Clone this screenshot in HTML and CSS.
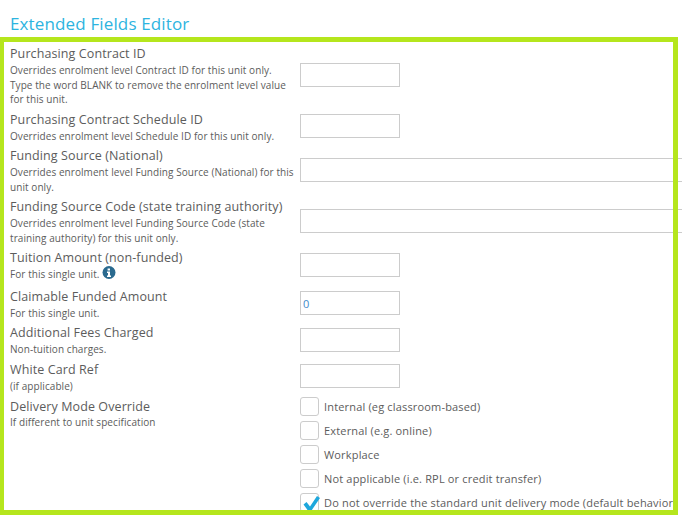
FILE: index.html
```html
<!DOCTYPE html>
<html lang="en">
<head>
<meta charset="utf-8">
<title>Extended Fields Editor</title>
<link rel="stylesheet" href="styles.css">
</head>
<body>
<h2 class="title">Extended Fields Editor</h2>
<div class="panel">
  <div class="row row-tall">
    <div class="info"><div class="name">Purchasing Contract ID</div><div class="hint">Overrides enrolment level Contract ID for this unit only.<br>Type the word BLANK to remove the enrolment level value for this unit.</div></div>
    <input class="field" type="text">
  </div>
  <div class="row">
    <div class="info"><div class="name">Purchasing Contract Schedule ID</div><div class="hint">Overrides enrolment level Schedule ID for this unit only.</div></div>
    <input class="field" type="text">
  </div>
  <div class="row">
    <div class="info"><div class="name">Funding Source (National)</div><div class="hint">Overrides enrolment level Funding Source (National) for this unit only.</div></div>
    <input class="field field-wide" type="text">
  </div>
  <div class="row">
    <div class="info"><div class="name">Funding Source Code (state training authority)</div><div class="hint">Overrides enrolment level Funding Source Code (state training authority) for this unit only.</div></div>
    <input class="field field-wide" type="text">
  </div>
  <div class="row row-icon">
    <div class="info"><div class="name">Tuition Amount (non-funded)</div><div class="hint">For this single unit. <svg class="info-icon" viewBox="0 0 14 14" aria-hidden="true"><circle cx="7" cy="7" r="6.5" fill="#2a6a8f"/><path d="M5.600 2.900h2.400v2H5.600zM5 6h3v4h1v1.400H5V10h1V7.400H5z" fill="#fff"/></svg></div></div>
    <input class="field" type="text">
  </div>
  <div class="row">
    <div class="info"><div class="name">Claimable Funded Amount</div><div class="hint">For this single unit.</div></div>
    <input class="field" type="text" value="0">
  </div>
  <div class="row">
    <div class="info"><div class="name">Additional Fees Charged</div><div class="hint">Non-tuition charges.</div></div>
    <input class="field" type="text">
  </div>
  <div class="row">
    <div class="info"><div class="name">White Card Ref</div><div class="hint">(if applicable)</div></div>
    <input class="field" type="text">
  </div>
  <div class="row row-options">
    <div class="info"><div class="name">Delivery Mode Override</div><div class="hint">If different to unit specification</div></div>
    <div class="options">
      <div class="option"><span class="box"></span><span class="opt-text">Internal (eg classroom-based)</span></div>
      <div class="option"><span class="box"></span><span class="opt-text">External (e.g. online)</span></div>
      <div class="option"><span class="box"></span><span class="opt-text">Workplace</span></div>
      <div class="option"><span class="box"></span><span class="opt-text">Not applicable (i.e. RPL or credit transfer)</span></div>
      <div class="option"><span class="box"><svg class="tick" viewBox="0 0 20 20" aria-hidden="true"><path d="M2.500 10.500 5.500 8 9 12.500 16 2l3 2-9.500 14H8z" fill="#1ea7dc"/></svg></span><span class="opt-text">Do not override the standard unit delivery mode (default behavior)</span></div>
    </div>
  </div>
</div>
</body>
</html>
```
FILE: styles.css
```css
html, body {
  margin: 0;
  height: 515px;
  overflow: hidden;
  background: #fff;
}
body {
  font-family: "Open Sans", sans-serif;
  color: #5c5c5c;
}
.title {
  margin: 0;
  height: 42px;
  padding: 12px 0 0 10px;
  box-sizing: border-box;
  font-size: 17px;
  line-height: 24px;
  letter-spacing: 0.14px;
  font-weight: 400;
  color: #2db4e0;
}
.panel {
  margin-left: 4px;
  width: 669px;
  height: 468px;
  box-sizing: border-box;
  padding-top: 3px;
  outline: 5px solid #b5e61d;
}
.row {
  display: flex;
  align-items: center;
  gap: 4px;
}
.row-icon {
  margin-bottom: 2px;
}
.row-options {
  align-items: flex-start;
}
.row-options .info {
  padding-top: 2px;
}
.row-options .hint {
  padding-top: 0;
}
.info {
  width: 292px;
  padding: 1px 0 5px 6px;
  box-sizing: border-box;
  flex: none;
}
.name {
  font-size: 12.500px;
  line-height: 16px;
  letter-spacing: 0.1px;
}
.hint {
  font-size: 10px;
  line-height: 14.500px;
  letter-spacing: 0.07px;
  padding-top: 1px;
  margin-bottom: -1px;
}
.field {
  width: 100px;
  height: 24px;
  box-sizing: border-box;
  flex: none;
  margin: 0 0 5px 0;
  padding: 0 2px;
  border: 1px solid #ccc;
  font: 11px "Open Sans", sans-serif;
  color: #428bca;
  outline: none;
}
.field-wide {
  width: 420px;
}
.options {
  display: flex;
  flex-direction: column;
  gap: 5px;
  white-space: nowrap;
}
.option {
  display: flex;
  align-items: center;
  gap: 5px;
  height: 19px;
}
.box {
  width: 19px;
  height: 19px;
  box-sizing: border-box;
  flex: none;
  border: 1px solid #ccc;
  border-radius: 3px;
  display: block;
}
.tick {
  display: block;
  width: 20px;
  height: 20px;
}
.opt-text {
  font-size: 11px;
  line-height: 16px;
  letter-spacing: 0.17px;
}
.info-icon {
  width: 14px;
  height: 14px;
  vertical-align: -2px;
  margin-top: -2px;
  transform: translateY(-0.5px);
}
```
